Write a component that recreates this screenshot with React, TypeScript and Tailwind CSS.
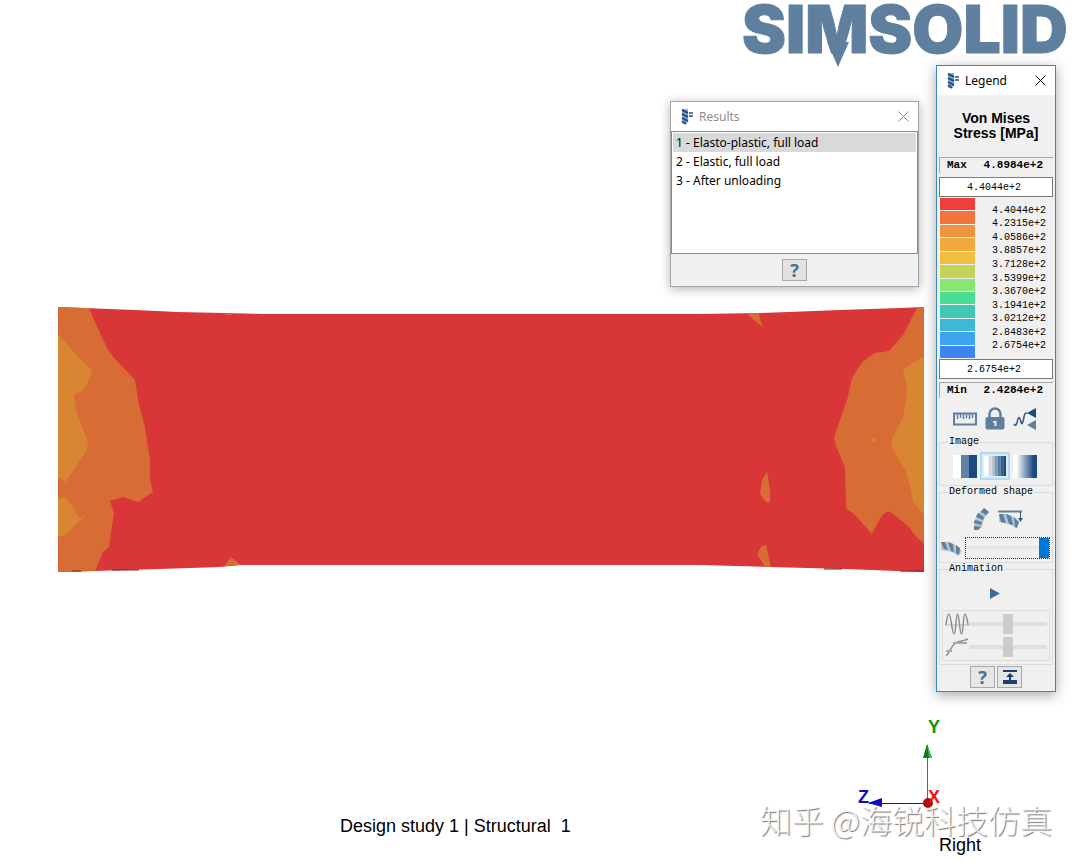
import React from "react";

const RESULTS = ["1 - Elasto-plastic, full load", "2 - Elastic, full load", "3 - After unloading"];

const SWATCHES = [
  "bg-[#f03e3f]",
  "bg-[#f2743d]",
  "bg-[#f0923e]",
  "bg-[#f0a83f]",
  "bg-[#f0bf3f]",
  "bg-[#c3d355]",
  "bg-[#88e672]",
  "bg-[#4bdc94]",
  "bg-[#3fc9b4]",
  "bg-[#3fb8d8]",
  "bg-[#3fa3f0]",
  "bg-[#3f85f0]",
];

const LEVELS = [
  "4.4044e+2",
  "4.2315e+2",
  "4.0586e+2",
  "3.8857e+2",
  "3.7128e+2",
  "3.5399e+2",
  "3.3670e+2",
  "3.1941e+2",
  "3.0212e+2",
  "2.8483e+2",
  "2.6754e+2",
];

const Logo = () => (
  <svg className="absolute top-0 right-0 w-[340px] h-[70px] overflow-visible" viewBox="0 0 340 70" fill="#5f7f9f" role="img" aria-label="SIMSOLID">
    <text x="2" y="53" stroke="#5f7f9f" strokeWidth="1" className="font-['Inter',sans-serif] font-black text-[66px]">SIMSOLID</text>
    <path d="M87 42h22L98 67Z" />
  </svg>
);

const AppIcon = () => (
  <svg className="w-[13px] h-[16px] shrink-0" viewBox="0 0 13 16">
    <path d="M1 0h6v13l-2 2H1l1-4-1-4Z" fill="#8fb2d8" />
    <path d="M1 1l6 3M1 5l6 3M1 9l6 3M1 12l4 3" stroke="#244a86" strokeWidth="2" />
    <path d="M8 4h4M8 7h4" stroke="#5676a4" strokeWidth="2" />
  </svg>
);

const CloseIcon = () => (
  <svg className="w-[11px] h-[11px]" viewBox="0 0 11 11" fill="none" stroke="currentColor">
    <path d="M.5.5l10 10M10.500.5l-10 10" />
  </svg>
);

const RulerIcon = () => (
  <svg className="w-6 h-6" viewBox="0 0 24 24" fill="none" stroke="#5f7f9f">
    <path d="M1 6.500h22v11H1Z" strokeWidth="2" />
    <path d="M4.500 7v5M7.500 7v4M10.500 7v5M13.500 7v4M16.500 7v5M19.500 7v4" strokeWidth="1.500" />
  </svg>
);

const LockIcon = () => (
  <svg className="w-5 h-6" viewBox="0 0 20 24">
    <path d="M4.500 11V7a5.500 5.500 0 0 1 11 0v4" fill="none" stroke="#5f7f9f" strokeWidth="2.500" />
    <rect x="0.500" y="10" width="19" height="12.500" rx="2" fill="#5f7f9f" />
    <path d="M8 14h3.500v5H9.500v-3.500H8Z" fill="#e8edf2" />
  </svg>
);

const CurveRangeIcon = () => (
  <svg className="w-6 h-6" viewBox="0 0 24 24">
    <path d="M1 17c2 4 3-2 4-5s2-1 3 3 2 0 3-5 1-3 3-4" fill="none" stroke="#35567f" strokeWidth="1.500" />
    <path d="M23 1v10l-9-5Z" fill="#1b4a80" />
    <path d="M23 13v10l-9-5Z" fill="#5f7f9f" />
  </svg>
);

// Bent, striped beam used beside the scale slider
const BeamIcon = () => (
  <svg className="w-[22px] h-4 shrink-0" viewBox="0 0 22 16">
    <path d="M0 2h8l7 3 6 6-4 5-6-4-11-2Z" fill="#b4c5d4" />
    <path d="M0 2h4l3 8-4-1ZM7 2l5 2 1 8-3-1ZM15 5l4 3-1 7-3-2Z" fill="#5f7f9f" />
  </svg>
);

const UprightBeamIcon = () => (
  <svg className="w-[15px] h-[22px]" viewBox="0 0 15 22">
    <path d="M10 0l5 4-5 7-2 8-3 2H0V14l3-8Z" fill="#b4c5d4" />
    <path d="M10 0l5 4-3 3-5-3ZM4 5l6 4-1 3-7-3ZM1 12l7 2-1 3-7-2ZM0 18l7 1-3 3H0Z" fill="#5f7f9f" />
  </svg>
);

const TrueScaleIcon = () => (
  <svg className="w-[25px] h-[20px]" viewBox="0 0 25 20">
    <path d="M1 5h8l7 3 5 5-3 6-7-4-10-2Z" fill="#b4c5d4" />
    <path d="M1 5h4l3 9-5-1ZM8 5l5 2 2 9-4-1ZM16 8l5 5-2 6-2-1Z" fill="#5f7f9f" />
    <path d="M0 2.500h24" stroke="#5f7f9f" strokeWidth="2" />
    <path d="M22.500 3v9" stroke="#35567f" />
    <path d="M20 9h5l-2.500 4Z" fill="#35567f" />
  </svg>
);

const WaveIcon = () => (
  <svg className="w-[24px] h-[22px] shrink-0" viewBox="0 0 24 22" fill="none" stroke="#8f8f8f">
    <path d="M0 12h24" stroke="#b8b8b8" />
    <path d="M1 12C2 4 3 1 4 1c2 0 3 20 5 20S11 1 12.500 1c2 0 2 20 4 20S18 1 20 1c1 0 2 4 3 11" strokeWidth="1.500" />
  </svg>
);

const RampIcon = () => (
  <svg className="w-[24px] h-[20px] shrink-0" viewBox="0 0 24 20" fill="none" stroke="#8f8f8f">
    <path d="M1 19C6 15 7 5 13 5c4-1 6-1 10-3" strokeWidth="1.500" />
    <path d="M1 14h6M8 6h14" stroke="#a8a8a8" strokeWidth="2" />
  </svg>
);

const PinIcon = () => (
  <svg className="w-4 h-4" viewBox="0 0 16 16" fill="#1b3f73">
    <path d="M1 1h14v2H1ZM1 11h14v4H1ZM7 6h2v5H7ZM8 4l4 4H4Z" />
  </svg>
);

const StressPlot = () => (
  <svg className="block w-full h-auto" viewBox="0 0 866 265" role="img" aria-label="Von Mises stress">
    <path d="M0 0L26 1 77 3 120 5 165 6 205 7H642L702 6 782 3 842 1 866 0V265L787 262 712 260 642 258H182L162 260 102 262 37 264 0 265Z" fill="#d93637" />
    <g fill="#d86c35">
      <path d="M0 0L26 1H31L37 15 50 43 58 53 77 73 81 98 87 120 92 153V173L95 185 80 195 65 190 52 194 56 206 51 240 45 245 37 264 0 265Z" />
      <path d="M866 0L859 1 845 28 831 44 817 46 804 55 794 71 789 93 780 118 776 131 778 139 787 161 788 201 797 208 814 227C822 212 826 201 834 206L850 219 860 232 866 236Z" />
      <path d="M165 7L177 6 172 8H168ZM166 259L173 250 183 258ZM689 7L701 6 702 13 705 20 697 14Z" />
      <path d="M709 165L712 183V195H708L702 187 704 173ZM703 240L708 238 713 260H707L699 247Z" />
    </g>
    <g fill="#d88534">
      <path d="M0 27L21 51 34 63 31 73 25 83 16 87 18 103 30 136 29 143 17 161 7 175 0 170Z" />
      <path d="M0 192L7 190 14 198 21 211 28 208 8 227 0 230Z" />
      <path d="M866 49L845 62 849 82 848 95 845 110 834 132V141L847 163 853 183 855 195 866 208Z" />
      <circle cx="816" cy="133" r="2" />
    </g>
    <path d="M14 264h9M54 263h27M766 262h18M842 264h24" stroke="#7a2328" />
  </svg>
);

const AxisTriad = () => (
  <svg className="absolute right-[135px] bottom-[50px] w-[90px] h-[100px] font-['Liberation_Sans',sans-serif] text-[18px] font-bold" viewBox="0 0 90 100">
    <path d="M72.500 30v58" stroke="#159a25" />
    <path d="M72 29l5 14h-9Z" fill="#0c7a18" />
    <path d="M72 29l2 14h3Z" fill="#45b94b" />
    <path d="M14 88.500h59" stroke="#1c1c9e" />
    <path d="M13 88l14-5v9Z" fill="#0c0cb8" />
    <circle cx="73" cy="88" r="5" fill="#b00d0d" />
    <text x="73" y="18" fill="#0b960b">Y</text>
    <text x="3" y="88" fill="#0a0ad0">Z</text>
    <text x="73" y="88" fill="#ee1111">X</text>
  </svg>
);

const Section = ({ title, className, children }: { title: string; className: string; children: React.ReactNode }) => (
  <fieldset className={`min-w-0 border border-[#dcdcdc] ${className}`}>
    <legend className="ml-2 px-px text-[10px] leading-3">{title}</legend>
    {children}
  </fieldset>
);

const ResultsWindow = () => (
  <section
    aria-label="Results"
    className="absolute top-[101px] right-[161px] w-[249px] border border-[#a3a3a3] bg-[#f0f0f0] font-['Noto_Sans',sans-serif] text-[12px] shadow-[0_2px_10px_rgba(0,0,0,0.3)]"
  >
    <header className="flex h-[29px] items-center bg-white pl-[10px] pr-[9px] text-[#8c8c8c]">
      <AppIcon />
      <h2 className="ml-[5px] flex-1">Results</h2>
      <button type="button" aria-label="Close results">
        <CloseIcon />
      </button>
    </header>
    <ul className="h-[123px] border border-[#8a8a8a] bg-white p-px text-black">
      {RESULTS.map((label, i) => (
        <li key={label}>
          <button type="button" className={`block h-[19px] w-full pl-[3px] text-left leading-[19px] ${i === 0 ? "bg-[#d9d9d9]" : ""}`}>
            {label}
          </button>
        </li>
      ))}
    </ul>
    <footer className="flex h-8 items-center justify-center">
      <button type="button" aria-label="Help" className="flex h-[22px] w-[25px] items-center justify-center border border-[#a8a8a8] bg-[#e2e2e2] text-[18px] font-bold text-[#4a6f95]">
        ?
      </button>
    </footer>
  </section>
);

const LegendWindow = () => (
  <section
    aria-label="Legend"
    className="absolute top-[65px] right-[24px] w-[120px] border border-[#3a87bd] bg-[#f0f0f0] font-['Liberation_Mono',monospace] text-black shadow-[0_3px_12px_rgba(0,0,0,0.35)]"
  >
    <header className="flex h-[29px] items-center bg-white pl-[10px] pr-[9px] font-['Noto_Sans',sans-serif] text-[12px]">
      <AppIcon />
      <h2 className="ml-[5px] flex-1">Legend</h2>
      <button type="button" aria-label="Close legend">
        <CloseIcon />
      </button>
    </header>

    <div className="px-[2px] pb-[3px]">
      <h3 className="pt-4 pb-4 text-center font-['Liberation_Sans',sans-serif] text-[14px] leading-[15px] font-bold">
        Von Mises
        <br />
        Stress [MPa]
      </h3>

      <div className="flex h-4 items-center justify-between border-t border-l border-[#a8a8a8] pl-[7px] pr-[10px] text-[11px] font-bold">
        <span>Max</span>
        <span>4.8984e+2</span>
      </div>
      <input aria-label="Upper limit" defaultValue="4.4044e+2" className="mt-1 block h-5 w-full border border-[#7a7a7a] bg-white pr-1 text-center text-[10px]" />

      {/* Colour scale */}
      <div className="flex h-[162px] justify-between">
        <div className="flex w-9 flex-col gap-px py-px pl-px">
          {SWATCHES.map((color) => (
            <div key={color} className={`flex-1 ${color}`} />
          ))}
        </div>
        <ol className="flex flex-col pt-[7px] pb-[6px] pr-[7px] text-[10px]">
          {LEVELS.map((level) => (
            <li key={level} className="flex flex-1 items-center leading-3">{level}</li>
          ))}
        </ol>
      </div>

      <input aria-label="Lower limit" defaultValue="2.6754e+2" className="block h-5 w-full border border-[#7a7a7a] bg-white pr-1 text-center text-[10px]" />
      <div className="mt-[3px] flex h-4 items-center justify-between border-t border-l border-[#a8a8a8] pl-[7px] pr-[10px] text-[11px] font-bold">
        <span>Min</span>
        <span>2.4284e+2</span>
      </div>

      <div className="mt-[9px] mb-[5px] flex items-center justify-center gap-2 pr-[2px]">
        <button type="button" aria-label="Measure"><RulerIcon /></button>
        <button type="button" aria-label="Lock limits"><LockIcon /></button>
        <button type="button" aria-label="Range"><CurveRangeIcon /></button>
      </div>

      <Section title="Image" className="h-[50px]">
        <div className="mt-1 flex items-center justify-center gap-[3px] pr-[2px]">
          <button type="button" aria-label="Two bands" className="h-[23px] w-6 bg-[linear-gradient(to_right,#ffffff_33%,#5f82a8_33%,#5f82a8_67%,#1b4a80_67%)]" />
          <button type="button" aria-label="Banded" aria-pressed="true" className="h-7 w-[30px] border-2 border-[#b5d8f3] bg-[#dcecf8] p-[2px]">
            <svg className="h-full w-full" viewBox="0 0 24 22" preserveAspectRatio="none">
              <rect width="6" height="22" fill="#fff" />
              <rect x="5" width="4" height="22" fill="#d5dce4" />
              <rect x="9" width="3" height="22" fill="#adbccb" />
              <rect x="12" width="3" height="22" fill="#8199b3" />
              <rect x="15" width="3" height="22" fill="#577a9f" />
              <rect x="18" width="3" height="22" fill="#34608f" />
              <rect x="21" width="3" height="22" fill="#1b4a80" />
            </svg>
          </button>
          <button type="button" aria-label="Smooth" className="h-[23px] w-6 bg-linear-to-r from-white from-15% to-[#1b4a80] to-85%" />
        </div>
      </Section>

      <Section title="Deformed shape" className="h-[77px]">
        <div className="mt-[9px] flex h-[23px] items-center justify-center gap-[9px] pl-1">
          <button type="button" aria-label="Deformed"><UprightBeamIcon /></button>
          <button type="button" aria-label="True scale"><TrueScaleIcon /></button>
        </div>
        <div className="mt-[7px] flex items-center gap-[2px] pl-px pr-[2px]">
          <BeamIcon />
          <input
            type="range"
            aria-label="Deformation scale"
            defaultValue={100}
            className="h-[22px] w-full min-w-0 appearance-none border border-dotted border-[#333333] bg-[linear-gradient(#f0f0f0_40%,#dadada_40%,#e8e8e8_45%,#e8e8e8_60%,#f0f0f0_60%)] [&::-webkit-slider-thumb]:h-5 [&::-webkit-slider-thumb]:w-[10px] [&::-webkit-slider-thumb]:appearance-none [&::-webkit-slider-thumb]:bg-[#0078d7]"
          />
        </div>
      </Section>

      <Section title="Animation" className="h-[102px]">
        <div className="mt-[13px] flex justify-center pr-[2px]">
          <button type="button" aria-label="Play">
            <svg className="block w-[10px] h-[11px]" viewBox="0 0 10 11"><path d="M0 0l10 5.500L0 11Z" fill="#3f6c96" /></svg>
          </button>
        </div>
        <div className="mx-[2px] mt-[11px] flex h-[51px] flex-col justify-center gap-px border border-[#dcdcdc] px-[2px]">
          <div className="flex h-[22px] items-center">
            <WaveIcon />
            <input type="range" aria-label="Cycles" disabled className="h-[22px] w-full min-w-0 appearance-none bg-transparent [&::-webkit-slider-runnable-track]:h-1 [&::-webkit-slider-runnable-track]:bg-[#dfdfdf] [&::-webkit-slider-thumb]:-mt-2 [&::-webkit-slider-thumb]:h-5 [&::-webkit-slider-thumb]:w-[10px] [&::-webkit-slider-thumb]:appearance-none [&::-webkit-slider-thumb]:bg-[#cccccc]" />
          </div>
          <div className="flex h-[22px] items-center">
            <RampIcon />
            <input type="range" aria-label="Speed" disabled className="h-[22px] w-full min-w-0 appearance-none bg-transparent [&::-webkit-slider-runnable-track]:h-1 [&::-webkit-slider-runnable-track]:bg-[#dfdfdf] [&::-webkit-slider-thumb]:-mt-2 [&::-webkit-slider-thumb]:h-5 [&::-webkit-slider-thumb]:w-[10px] [&::-webkit-slider-thumb]:appearance-none [&::-webkit-slider-thumb]:bg-[#cccccc]" />
          </div>
        </div>
      </Section>

      <footer className="mt-px flex justify-center gap-[2px]">
        <button type="button" aria-label="Help" className="flex h-[22px] w-[25px] items-center justify-center border border-[#a8a8a8] bg-[#e6e6e6] font-['Noto_Sans',sans-serif] text-[18px] font-bold text-[#4a6f95]">
          ?
        </button>
        <button type="button" aria-label="Collapse" className="flex h-[22px] w-[25px] items-center justify-center border border-[#a8a8a8] bg-[#e6e6e6]">
          <PinIcon />
        </button>
      </footer>
    </div>
  </section>
);

export default function App() {
  return (
    <main className="relative min-h-screen overflow-hidden bg-white font-['Liberation_Sans',sans-serif] text-black">
      <Logo />

      <div className="pt-[307px] pr-[156px] pl-[58px]">
        <StressPlot />
      </div>

      {/* --- Viewport labels --- */}
      <p className="absolute bottom-[27px] left-[340px] text-[18px] leading-6 whitespace-pre">Design study 1 | Structural  1</p>
      <AxisTriad />
      <p className="absolute right-[99px] bottom-[8px] text-[18px] leading-6">Right</p>
      <p className="absolute right-[28px] bottom-[24px] font-['Noto_Sans_CJK_SC',sans-serif] text-[32px] leading-[44px] font-light whitespace-nowrap text-white/80 [text-shadow:1px_1px_1px_#777777]">
        知乎 @海锐科技仿真
      </p>

      {/* --- Floating windows --- */}
      <ResultsWindow />
      <LegendWindow />
    </main>
  );
}
